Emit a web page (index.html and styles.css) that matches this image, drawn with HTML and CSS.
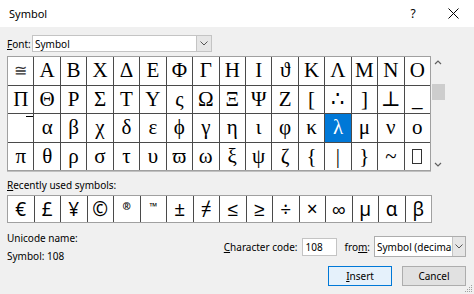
FILE: index.html
```html
<!DOCTYPE html>
<html lang="en">
  <head>
    <meta charset="UTF-8" />
    <title>Symbol</title>
    <link rel="stylesheet" href="styles.css">
  </head>
  <body>
    <div class="titlebar">
      <span class="title">Symbol</span>
      <span class="tb-btn">?</span>
      <span class="tb-btn close">
        <svg width="11" height="11" viewBox="0 0 11 11"><path d="M0.5 0.5 L10.5 10.5 M10.5 0.5 L0.5 10.5" stroke="#000" stroke-width="1" fill="none"/></svg>
      </span>
    </div>

    <div class="main">
      <div class="font-row">
        <label class="font-label"><u>F</u>ont:</label>
        <div class="combo font-combo">
          <span class="combo-text">Symbol</span>
          <span class="drop">
            <svg width="8" height="5" viewBox="0 0 8 5"><path d="M0.5 0.5 L4 4 L7.5 0.5" stroke="#555" fill="none"/></svg>
          </span>
        </div>
      </div>

      <div class="chars">
        <div class="grid">
          <div class="cell small">≅</div><div class="cell">Α</div><div class="cell">Β</div><div class="cell">Χ</div>
          <div class="cell">Δ</div><div class="cell">Ε</div><div class="cell">Φ</div><div class="cell">Γ</div>
          <div class="cell">Η</div><div class="cell">Ι</div><div class="cell">ϑ</div><div class="cell">Κ</div>
          <div class="cell">Λ</div><div class="cell">Μ</div><div class="cell">Ν</div><div class="cell">Ο</div>

          <div class="cell">Π</div><div class="cell">Θ</div><div class="cell">Ρ</div><div class="cell">Σ</div>
          <div class="cell">Τ</div><div class="cell">Υ</div><div class="cell">ς</div><div class="cell">Ω</div>
          <div class="cell">Ξ</div><div class="cell">Ψ</div><div class="cell">Ζ</div><div class="cell">[</div>
          <div class="cell">∴</div><div class="cell">]</div><div class="cell">⊥</div><div class="cell">_</div>

          <div class="cell over"><span class="bar"></span></div><div class="cell">α</div><div class="cell">β</div><div class="cell">χ</div>
          <div class="cell">δ</div><div class="cell">ε</div><div class="cell">ϕ</div><div class="cell">γ</div>
          <div class="cell">η</div><div class="cell">ι</div><div class="cell">φ</div><div class="cell">κ</div>
          <div class="cell sel">λ</div><div class="cell">μ</div><div class="cell">ν</div><div class="cell">ο</div>

          <div class="cell">π</div><div class="cell">θ</div><div class="cell">ρ</div><div class="cell">σ</div>
          <div class="cell">τ</div><div class="cell">υ</div><div class="cell">ϖ</div><div class="cell">ω</div>
          <div class="cell">ξ</div><div class="cell">ψ</div><div class="cell">ζ</div><div class="cell">{</div>
          <div class="cell">|</div><div class="cell">}</div><div class="cell">~</div><div class="cell box"><span class="square"></span></div>
        </div>
        <div class="scrollbar">
          <svg class="arrow" width="8" height="14" viewBox="0 0 8 14"><path d="M1 8 L4 5 L7 8" stroke="#606060" stroke-width="1.2" fill="none"/></svg>
          <div class="thumb"></div>
          <div class="spacer"></div>
          <svg class="arrow" width="8" height="14" viewBox="0 0 8 14"><path d="M1 6 L4 9 L7 6" stroke="#606060" stroke-width="1.2" fill="none"/></svg>
        </div>
      </div>

      <div class="recent-label"><u>R</u>ecently used symbols:</div>
      <div class="recent">
        <div class="rcell">€</div><div class="rcell">£</div><div class="rcell">¥</div><div class="rcell">©</div>
        <div class="rcell"><span class="sup">®</span></div><div class="rcell"><span class="sup">™</span></div><div class="rcell">±</div><div class="rcell">≠</div>
        <div class="rcell">≤</div><div class="rcell">≥</div><div class="rcell">÷</div><div class="rcell">×</div>
        <div class="rcell">∞</div><div class="rcell">µ</div><div class="rcell">α</div><div class="rcell">β</div>
      </div>

      <div class="footer">
        <div class="info">
          <div>Unicode name:</div>
          <div>Symbol: 108</div>
        </div>
        <div class="controls">
          <div class="code-row">
            <label><u>C</u>haracter code:</label>
            <div class="field">108</div>
            <label class="from-label">fro<u>m</u>:</label>
            <div class="combo from-combo">
              <span class="combo-text">Symbol (decimal)</span>
              <span class="drop">
                <svg width="8" height="5" viewBox="0 0 8 5"><path d="M0.5 0.5 L4 4 L7.5 0.5" stroke="#555" fill="none"/></svg>
              </span>
            </div>
          </div>
          <div class="buttons">
            <button class="btn primary"><u>I</u>nsert</button>
            <button class="btn">Cancel</button>
          </div>
        </div>
      </div>
    </div>

    <svg class="grip" width="8" height="8" viewBox="0 0 8 8">
      <rect x="6" y="0" width="1" height="1" fill="#a0a0a0"/>
      <rect x="4" y="2" width="1" height="1" fill="#a0a0a0"/>
      <rect x="6" y="2" width="1" height="1" fill="#a0a0a0"/>
      <rect x="2" y="4" width="1" height="1" fill="#a0a0a0"/>
      <rect x="4" y="4" width="1" height="1" fill="#a0a0a0"/>
      <rect x="6" y="4" width="1" height="1" fill="#a0a0a0"/>
      <rect x="0" y="6" width="1" height="1" fill="#a0a0a0"/>
      <rect x="2" y="6" width="1" height="1" fill="#a0a0a0"/>
      <rect x="4" y="6" width="1" height="1" fill="#a0a0a0"/>
      <rect x="6" y="6" width="1" height="1" fill="#a0a0a0"/>
    </svg>
  </body>
</html>
```

FILE: styles.css
```css
* {
  margin: 0;
  padding: 0;
  box-sizing: border-box;
}

body {
  width: 474px;
  height: 294px;
  overflow: hidden;
  background: #f0f0f0;
  color: #000;
  font-family: "Noto Sans", sans-serif;
  font-size: 10px;
  position: relative;
}

.titlebar {
  height: 27px;
  background: #fff;
  display: flex;
  align-items: center;
  padding-left: 9px;
  font-size: 11px;
}

.titlebar .title {
  flex: 1;
}

.tb-btn {
  width: 40px;
  height: 27px;
  display: flex;
  align-items: center;
  justify-content: center;
  font-size: 12px;
}

.tb-btn.close {
  margin-right: 1px;
}

.main {
  padding: 0 7px;
}

.font-row {
  display: flex;
  align-items: center;
  margin-top: 8px;
  height: 17px;
}

.font-label {
  width: 25px;
}

.combo {
  background: #fff;
  border: 1px solid #c4c4c4;
  display: flex;
  align-items: center;
  overflow: hidden;
}

.combo-text {
  flex: 1;
  padding-left: 2px;
  white-space: nowrap;
  overflow: hidden;
}

.font-combo {
  width: 180px;
  height: 17px;
}

.drop {
  width: 15px;
  height: 100%;
  background: #e6e6e6;
  border-left: 1px solid #c4c4c4;
  display: flex;
  align-items: center;
  justify-content: center;
}

.chars {
  display: flex;
  margin-top: 4px;
}

.grid {
  width: 424px;
  height: 115px;
  border: 1px solid #a0a0a0;
  background: #4a4a4a;
  display: grid;
  grid-template-columns: repeat(16, 1fr);
  grid-template-rows: repeat(4, 1fr);
  gap: 1px;
  box-shadow: 0 1px 0 #c0c0c0;
}

.cell {
  background: #fff;
  display: flex;
  align-items: center;
  justify-content: center;
  font-family: "Liberation Serif", "DejaVu Serif", serif;
  font-size: 21px;
  line-height: 1;
  overflow: hidden;
}

.cell.small {
  font-size: 16px;
  color: #333;
}

.cell.sel {
  background: #0078d7;
  color: #fff;
}

.cell.over {
  align-items: flex-start;
  justify-content: flex-end;
}

.cell .bar {
  width: 7px;
  height: 1px;
  background: #000;
  margin-top: 2px;
}

.cell .square {
  width: 10px;
  height: 15px;
  border: 1px solid #333;
}

.scrollbar {
  width: 14px;
  display: flex;
  flex-direction: column;
  align-items: center;
}

.scrollbar .thumb {
  width: 13px;
  height: 16px;
  background: #cdcdcd;
  margin-top: 14px;
}

.scrollbar .spacer {
  flex: 1;
}

.recent-label {
  margin-top: 7px;
  line-height: 14px;
}

.recent {
  margin-top: 3px;
  width: 425px;
  height: 28px;
  border: 1px solid #a0a0a0;
  background: #4a4a4a;
  display: grid;
  grid-template-columns: repeat(16, 1fr);
  gap: 1px;
}

.rcell {
  background: #fff;
  display: flex;
  align-items: center;
  justify-content: center;
  font-size: 19px;
  line-height: 1;
}

.rcell .sup {
  font-size: 10px;
  font-weight: bold;
  align-self: flex-start;
  margin-top: 5px;
}

.footer {
  display: flex;
  justify-content: space-between;
}

.info {
  margin-top: 8px;
  line-height: 14px;
  display: flex;
  flex-direction: column;
  gap: 4px;
}

.controls {
  margin-top: 13px;
  padding-right: 1px;
  display: flex;
  flex-direction: column;
  align-items: flex-end;
}

.code-row {
  display: flex;
  align-items: center;
  height: 21px;
}

.code-row label {
  margin-right: 4px;
}

.field {
  width: 35px;
  height: 18px;
  background: #fff;
  border: 1px solid #c4c4c4;
  padding-left: 3px;
  line-height: 16px;
}

.code-row .from-label {
  margin-left: 8px;
}

.from-combo {
  width: 92px;
  height: 21px;
  border-color: #adadad;
}

.from-combo .drop {
  width: 13px;
}

.buttons {
  display: flex;
  gap: 10px;
  margin-top: 9px;
}

.btn {
  width: 64px;
  height: 20px;
  border: 1px solid #adadad;
  background: #e1e1e1;
  font-family: "Noto Sans", sans-serif;
  font-size: 10px;
  color: #000;
}

.btn.primary {
  border-color: #0078d7;
  background: #e5f1fb;
}

.grip {
  position: absolute;
  right: 1px;
  bottom: 1px;
}
```
